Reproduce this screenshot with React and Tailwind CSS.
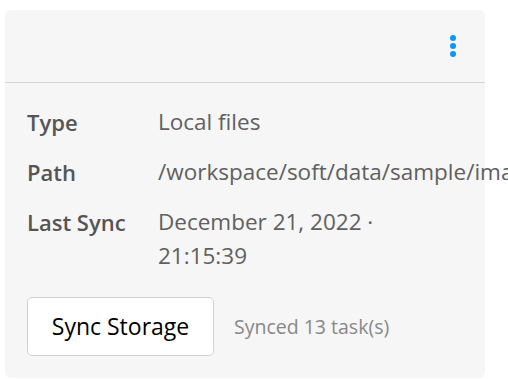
const Dots = () => (
  <svg width="8" height="24" viewBox="0 0 8 24" className="block">
    <circle cx="4" cy="4" r="3" fill="#0a96fa" />
    <circle cx="4" cy="12" r="3" fill="#0a96fa" />
    <circle cx="4" cy="20" r="3" fill="#0a96fa" />
  </svg>
)

const Row = ({ label, children }) => (
  <>
    <div className="font-semibold text-[#555555] text-[22px]">{label}</div>
    <div className="text-[#606060] text-[22.5px] whitespace-nowrap">{children}</div>
  </>
)

const App = () => {
  return (
    <div className="w-[508px] h-[379px] overflow-hidden bg-white pt-[10px] pl-[5px] font-['Open_Sans',sans-serif]">
      <div className="w-[480px] h-[368px] bg-[#f6f6f6] rounded-[6px] flex flex-col">
        <div className="h-[73px] border-b border-[#d6d6d6] flex items-center justify-end pr-[28px] shrink-0">
          <Dots />
        </div>
        <div className="px-[22px] pt-[22px]">
          <div className="grid grid-cols-[131px_1fr] gap-y-[16px] leading-[34px]">
            <Row label="Type">Local files</Row>
            <Row label="Path">/workspace/soft/data/sample/images</Row>
            <Row label="Last Sync">
              December 21, 2022 ·
              <br />
              21:15:39
            </Row>
          </div>
          <div className="mt-[24px] flex items-center gap-[20px]">
            <button className="h-[59px] w-[187px] bg-white border border-[#d2d2d2] rounded-[5px] text-[23px] text-black">
              Sync Storage
            </button>
            <span className="text-[19.5px] text-[#888888]">Synced 13 task(s)</span>
          </div>
        </div>
      </div>
    </div>
  )
}

export default App
